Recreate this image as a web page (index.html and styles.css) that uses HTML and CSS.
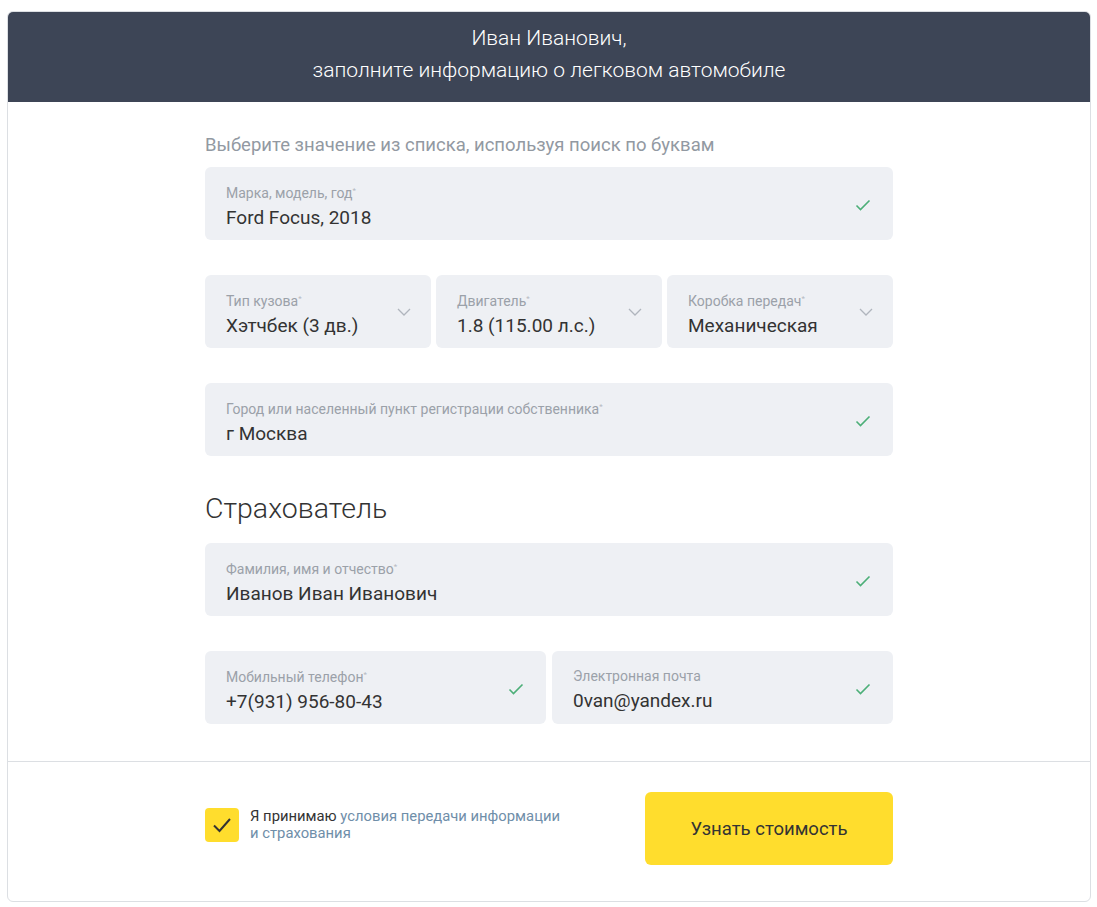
FILE: index.html
```html
<!DOCTYPE html>
<html lang="ru">

<head>
    <meta charset="UTF-8">
    <meta name="viewport" content="width=device-width, initial-scale=1.0">
    <title>ОСАГО — легковой автомобиль</title>
    <link rel="stylesheet" href="styles.css">
</head>

<body>
    <div class="form-card">
        <div class="form-header">
            <p>Иван Иванович,</p>
            <p>заполните информацию о легковом автомобиле</p>
        </div>

        <div class="form-body">
            <p class="hint">Выберите значение из списка, используя поиск по буквам</p>

            <div class="field">
                <div class="field-text">
                    <span class="label">Марка, модель, год<sup>*</sup></span>
                    <span class="value">Ford Focus, 2018</span>
                </div>
                <svg class="icon-check" width="16" height="12" viewBox="0 0 16 12"><path d="M1.5 6.5l4 4L14.5 1.5" /></svg>
            </div>

            <div class="row row-3">
                <div class="field">
                    <div class="field-text">
                        <span class="label">Тип кузова<sup>*</sup></span>
                        <span class="value">Хэтчбек (3 дв.)</span>
                    </div>
                    <svg class="icon-arrow" width="14" height="8" viewBox="0 0 14 8"><path d="M1 1l6 6 6-6" /></svg>
                </div>
                <div class="field">
                    <div class="field-text">
                        <span class="label">Двигатель<sup>*</sup></span>
                        <span class="value">1.8 (115.00 л.с.)</span>
                    </div>
                    <svg class="icon-arrow" width="14" height="8" viewBox="0 0 14 8"><path d="M1 1l6 6 6-6" /></svg>
                </div>
                <div class="field">
                    <div class="field-text">
                        <span class="label">Коробка передач<sup>*</sup></span>
                        <span class="value">Механическая</span>
                    </div>
                    <svg class="icon-arrow" width="14" height="8" viewBox="0 0 14 8"><path d="M1 1l6 6 6-6" /></svg>
                </div>
            </div>

            <div class="field">
                <div class="field-text">
                    <span class="label">Город или населенный пункт регистрации собственника<sup>*</sup></span>
                    <span class="value">г Москва</span>
                </div>
                <svg class="icon-check" width="16" height="12" viewBox="0 0 16 12"><path d="M1.5 6.5l4 4L14.5 1.5" /></svg>
            </div>

            <h2 class="section-title">Страхователь</h2>

            <div class="field">
                <div class="field-text">
                    <span class="label">Фамилия, имя и отчество<sup>*</sup></span>
                    <span class="value">Иванов Иван Иванович</span>
                </div>
                <svg class="icon-check" width="16" height="12" viewBox="0 0 16 12"><path d="M1.5 6.5l4 4L14.5 1.5" /></svg>
            </div>

            <div class="row row-2">
                <div class="field">
                    <div class="field-text">
                        <span class="label">Мобильный телефон<sup>*</sup></span>
                        <span class="value">+7(931) 956-80-43</span>
                    </div>
                    <svg class="icon-check" width="16" height="12" viewBox="0 0 16 12"><path d="M1.5 6.5l4 4L14.5 1.5" /></svg>
                </div>
                <div class="field">
                    <div class="field-text">
                        <span class="label">Электронная почта</span>
                        <span class="value">0van@yandex.ru</span>
                    </div>
                    <svg class="icon-check" width="16" height="12" viewBox="0 0 16 12"><path d="M1.5 6.5l4 4L14.5 1.5" /></svg>
                </div>
            </div>
        </div>

        <div class="form-footer">
            <div class="agree">
                <span class="checkbox">
                    <svg width="20" height="16" viewBox="0 0 20 16"><path d="M2 8.5l5.5 5.5L18 2" /></svg>
                </span>
                <p>Я принимаю <a href="#">условия передачи информации<br>и страхования</a></p>
            </div>
            <button class="btn-submit" type="button">Узнать стоимость</button>
        </div>
    </div>
</body>
</html>
```

FILE: styles.css
```css
body, html {
    margin: 0;
    padding: 0;
    background: #fff;
    font-family: Roboto, "Liberation Sans", sans-serif;
    color: #333;
}

body {
    padding: 11px 6px 6px 7px;
}

.form-card {
    width: 1084px;
    border: 1px solid #dcdfe3;
    border-radius: 6px;
    overflow: hidden;
    box-sizing: border-box;
}

.form-header {
    background-color: #3d4556;
    color: #fff;
    text-align: center;
    padding: 10px 0 16px;
    font-size: 21px;
    font-weight: 300;
    line-height: 32px;
}

.form-header p {
    margin: 0;
}

.form-body {
    width: 688px;
    margin: 0 auto;
    padding: 31px 0 37px;
}

.hint {
    margin: 0 0 10px;
    font-size: 18.5px;
    color: #9299a2;
    line-height: 24px;
}

.field {
    display: flex;
    align-items: center;
    justify-content: space-between;
    height: 73px;
    padding: 0 22px 0 21px;
    box-sizing: border-box;
    background-color: #eef0f4;
    border-radius: 6px;
    margin-bottom: 35px;
}

.field-text {
    display: flex;
    flex-direction: column;
    gap: 3px;
    padding-top: 6px;
    min-width: 0;
}

.label {
    font-size: 14px;
    line-height: 18px;
    color: #9ba1a9;
}

.label sup {
    font-size: 8px;
    color: #b5bac1;
    vertical-align: 5px;
}

.value {
    font-size: 19px;
    line-height: 26px;
    color: #333;
    white-space: nowrap;
}

.icon-check {
    margin-top: 3px;
}

.icon-check path {
    fill: none;
    stroke: #4caf78;
    stroke-width: 1.6;
}

.icon-arrow path {
    fill: none;
    stroke: #b0b5bd;
    stroke-width: 1.3;
}

.row {
    display: grid;
    gap: 5px;
}

.row-3 {
    grid-template-columns: 1fr 1fr 1fr;
}

.row-3 .field {
    padding-right: 20px;
}

.row-2 {
    grid-template-columns: 341px 341px;
    gap: 6px;
}

.row-2 .field {
    margin-bottom: 0;
}

.section-title {
    margin: 34px 0 16px;
    font-size: 28.5px;
    font-weight: 300;
    line-height: 36px;
    color: #333;
}

.form-footer {
    border-top: 1px solid #dcdfe3;
    width: 100%;
    display: flex;
    justify-content: center;
    align-items: center;
    padding: 30px 0 36px;
}

.agree {
    width: 440px;
    display: flex;
    align-items: center;
    gap: 11px;
    margin-bottom: 8px;
}

.checkbox {
    width: 34px;
    height: 34px;
    border-radius: 4px;
    background-color: #ffdd2d;
    display: flex;
    align-items: center;
    justify-content: center;
    flex-shrink: 0;
}

.checkbox path {
    fill: none;
    stroke: #333;
    stroke-width: 2;
}

.agree p {
    margin: 0;
    font-size: 14.8px;
    line-height: 17px;
    color: #333;
}

.agree a {
    color: #6f8ea9;
    text-decoration: none;
}

.btn-submit {
    width: 248px;
    height: 73px;
    border: none;
    border-radius: 6px;
    background-color: #ffdd2d;
    font-family: inherit;
    font-size: 18.5px;
    color: #333;
    cursor: pointer;
}
```
